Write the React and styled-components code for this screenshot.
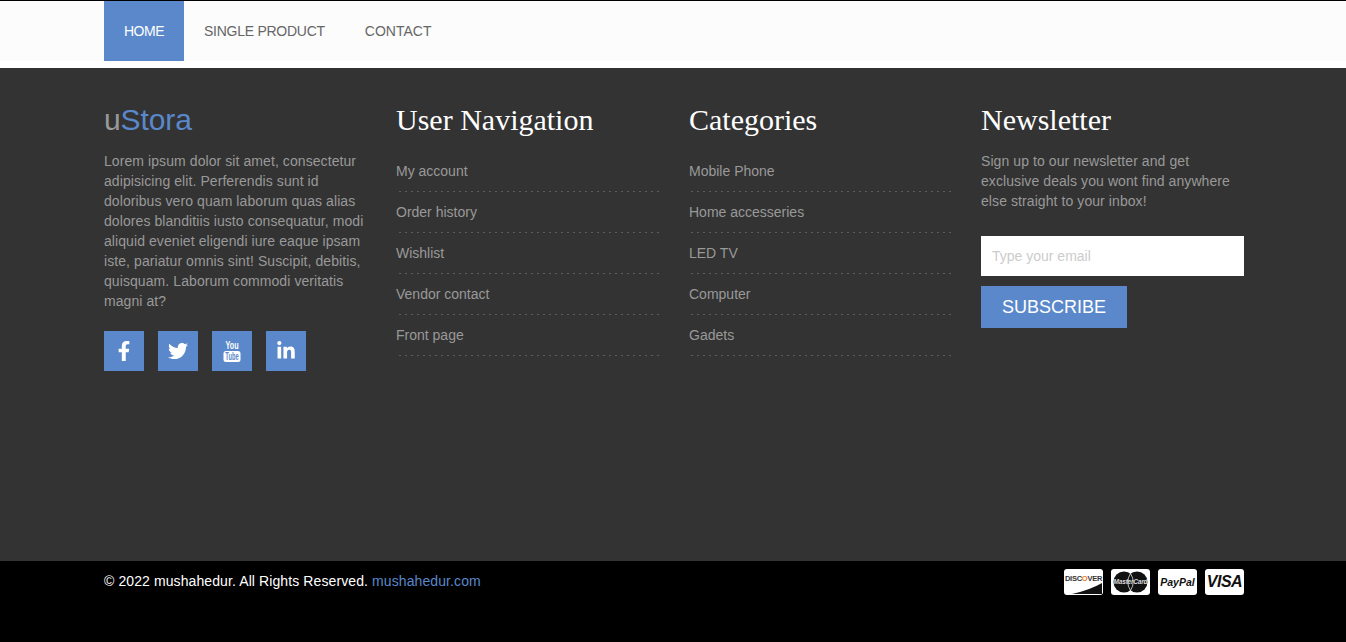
import React from 'react';
import styled, { createGlobalStyle } from 'styled-components';
import { FaFacebookF, FaTwitter, FaLinkedinIn } from 'react-icons/fa';

const GlobalStyle = createGlobalStyle`
  html, body {
    margin: 0;
    padding: 0;
    background: #fff;
  }
  body {
    font-family: "Liberation Sans", Arial, sans-serif;
    font-size: 14px;
    line-height: 20px;
    color: #999;
  }
  * {
    box-sizing: border-box;
  }
`;

const primary = '#5a88ca';

const Page = styled.div`
  min-height: 642px;
  display: flex;
  flex-direction: column;
  border-top: 1px solid #000;
`;

const Container = styled.div`
  margin: 0 87px 0 89px;
  padding: 0 15px;
`;

const HeaderBar = styled.header`
  height: 60px;
  margin-bottom: 7px;
  background: #fcfcfc;
`;

const Menu = styled.nav`
  display: flex;
`;

const MenuItem = styled.a`
  padding: 20px;
  font-size: 14px;
  line-height: 20px;
  letter-spacing: ${props => props.$spacing}px;
  text-transform: uppercase;
  color: ${props => (props.$active ? '#fff' : '#666')};
  background: ${props => (props.$active ? primary : 'transparent')};
`;

const FooterTop = styled.footer`
  flex: 1;
  background: #333;
  padding-top: 35px;
`;

const Columns = styled.div`
  display: grid;
  grid-template-columns: 262px 263px 262px 263px;
  column-gap: 30px;
`;

const Heading = styled.h2`
  margin: 0 0 15px;
  font-family: "Liberation Serif", "Times New Roman", serif;
  font-size: 30px;
  font-weight: 400;
  line-height: 33px;
  color: #fff;
`;

const Logo = styled.h2`
  margin: 0 0 15px;
  font-size: 30px;
  font-weight: 400;
  line-height: 33px;
  letter-spacing: -0.1px;
  color: #999;

  span {
    color: ${primary};
  }
`;

const Text = styled.p`
  margin: 0 0 ${props => props.$gap}px;
  letter-spacing: 0.08px;
`;

const SocialRow = styled.div`
  display: flex;
  gap: 14px;
`;

const SocialLink = styled.a`
  width: 40px;
  height: 40px;
  display: flex;
  align-items: center;
  justify-content: center;
  background: ${primary};
  color: #fff;
  font-size: 20px;
`;

const LinkList = styled.ul`
  margin: 0;
  padding: 0;
  list-style: none;
`;

const LinkItem = styled.li`
  padding: 10px 0 11px;
  background: repeating-linear-gradient(to left, #5c5c5c 0 2px, transparent 2px 6px) left bottom / 100% 1px no-repeat;
  color: #999;
`;

const EmailInput = styled.input`
  display: block;
  width: 100%;
  height: 40px;
  margin-bottom: 10px;
  padding: 0 11px;
  border: none;
  background: #fff;
  font-family: inherit;
  font-size: 14px;

  &::placeholder {
    color: #ccc;
    opacity: 1;
  }
`;

const SubscribeButton = styled.button`
  display: block;
  width: 146px;
  height: 42px;
  padding: 0;
  border: none;
  background: ${primary};
  color: #fff;
  font-family: inherit;
  font-size: 18px;
  text-transform: uppercase;
`;

const FooterBottom = styled.div`
  height: 81px;
  background: #000;
  padding-top: 8px;
`;

const BottomRow = styled.div`
  display: flex;
  justify-content: space-between;
`;

const Copyright = styled.p`
  margin: 2px 0 0;
  letter-spacing: 0.1px;
  color: #fff;

  a {
    color: ${primary};
  }
`;

const Cards = styled.div`
  display: flex;
  gap: 8px;
`;

const Card = styled.div`
  position: relative;
  width: 39px;
  height: 26px;
  display: flex;
  align-items: center;
  justify-content: center;
  overflow: hidden;
  border-radius: 3px;
  background: #fff;
  color: #111;
`;

const DiscoverLabel = styled.span`
  position: relative;
  margin-top: -6px;
  font-size: 7.5px;
  font-weight: 700;
  line-height: 8px;
  letter-spacing: -0.25px;
  color: #333;

  b {
    color: #e8791e;
  }
`;

const Swoosh = styled.svg`
  position: absolute;
  right: 0;
  bottom: 0;
`;

const MasterLabel = styled.span`
  position: absolute;
  font-size: 6.5px;
  font-weight: 700;
  font-style: italic;
  letter-spacing: -0.2px;
  color: #ddd;
`;

const PayPalLabel = styled.span`
  font-size: 10.5px;
  font-weight: 700;
  font-style: italic;
  color: #111;
`;

const VisaLabel = styled.span`
  font-size: 16px;
  font-weight: 700;
  font-style: italic;
  letter-spacing: -0.5px;
  color: #111;
`;

const YoutubeIcon = () => (
  <svg width="20" height="22" viewBox="0 0 20 22">
    <g transform="translate(10 9) scale(0.72 1)">
      <text textAnchor="middle" fontFamily="Liberation Sans, sans-serif" fontSize="10" fontWeight="700" fill="#fff">
        You
      </text>
    </g>
    <rect x="1.5" y="11" width="17" height="11" rx="2.5" fill="#fff" />
    <g transform="translate(10 20) scale(0.58 1)">
      <text textAnchor="middle" fontFamily="Liberation Sans, sans-serif" fontSize="10" fontWeight="700" fill={primary}>
        Tube
      </text>
    </g>
  </svg>
);

const navLinks = ['My account', 'Order history', 'Wishlist', 'Vendor contact', 'Front page'];
const categories = ['Mobile Phone', 'Home accesseries', 'LED TV', 'Computer', 'Gadets'];

const App = () => {
  return (
    <Page>
      <GlobalStyle />
      <HeaderBar>
        <Container>
          <Menu>
            <MenuItem $active $spacing={-0.5}>Home</MenuItem>
            <MenuItem $spacing={-0.26}>Single product</MenuItem>
            <MenuItem $spacing={0}>Contact</MenuItem>
          </Menu>
        </Container>
      </HeaderBar>

      <FooterTop>
        <Container>
          <Columns>
            <div>
              <Logo>
                u<span>Stora</span>
              </Logo>
              <Text $gap={20}>
                Lorem ipsum dolor sit amet, consectetur adipisicing elit. Perferendis sunt id doloribus vero quam
                laborum quas alias dolores blanditiis iusto consequatur, modi aliquid eveniet eligendi iure eaque
                ipsam iste, pariatur omnis sint! Suscipit, debitis, quisquam. Laborum commodi veritatis magni at?
              </Text>
              <SocialRow>
                <SocialLink>
                  <FaFacebookF />
                </SocialLink>
                <SocialLink>
                  <FaTwitter />
                </SocialLink>
                <SocialLink>
                  <YoutubeIcon />
                </SocialLink>
                <SocialLink>
                  <FaLinkedinIn />
                </SocialLink>
              </SocialRow>
            </div>

            <div>
              <Heading>User Navigation</Heading>
              <LinkList>
                {navLinks.map(link => (
                  <LinkItem key={link}>{link}</LinkItem>
                ))}
              </LinkList>
            </div>

            <div>
              <Heading>Categories</Heading>
              <LinkList>
                {categories.map(link => (
                  <LinkItem key={link}>{link}</LinkItem>
                ))}
              </LinkList>
            </div>

            <div>
              <Heading>Newsletter</Heading>
              <Text $gap={25}>
                Sign up to our newsletter and get exclusive deals you wont find anywhere else straight to your inbox!
              </Text>
              <EmailInput placeholder="Type your email" />
              <SubscribeButton>Subscribe</SubscribeButton>
            </div>
          </Columns>
        </Container>
      </FooterTop>

      <FooterBottom>
        <Container>
          <BottomRow>
            <Copyright>
              © 2022 mushahedur. All Rights Reserved. <a>mushahedur.com</a>
            </Copyright>
            <Cards>
              <Card>
                <Swoosh width="39" height="26" viewBox="0 0 39 26">
                  <path d="M38 14 Q26 21 8 25 L38 25 Z" fill="#111" />
                </Swoosh>
                <DiscoverLabel>
                  DISC<b>O</b>VER
                </DiscoverLabel>
              </Card>
              <Card>
                <svg width="35" height="22" viewBox="0 0 35 22">
                  <circle cx="11" cy="11" r="10.5" fill="#111" />
                  <circle cx="24" cy="11" r="10.5" fill="#111" />
                  <path d="M17.5 2.5 Q23 11 17.5 19.5 Q12 11 17.5 2.5 Z" fill="none" stroke="#fff" strokeWidth="0.7" />
                </svg>
                <MasterLabel>MasterCard</MasterLabel>
              </Card>
              <Card>
                <PayPalLabel>PayPal</PayPalLabel>
              </Card>
              <Card>
                <VisaLabel>VISA</VisaLabel>
              </Card>
            </Cards>
          </BottomRow>
        </Container>
      </FooterBottom>
    </Page>
  );
};

export default App;
